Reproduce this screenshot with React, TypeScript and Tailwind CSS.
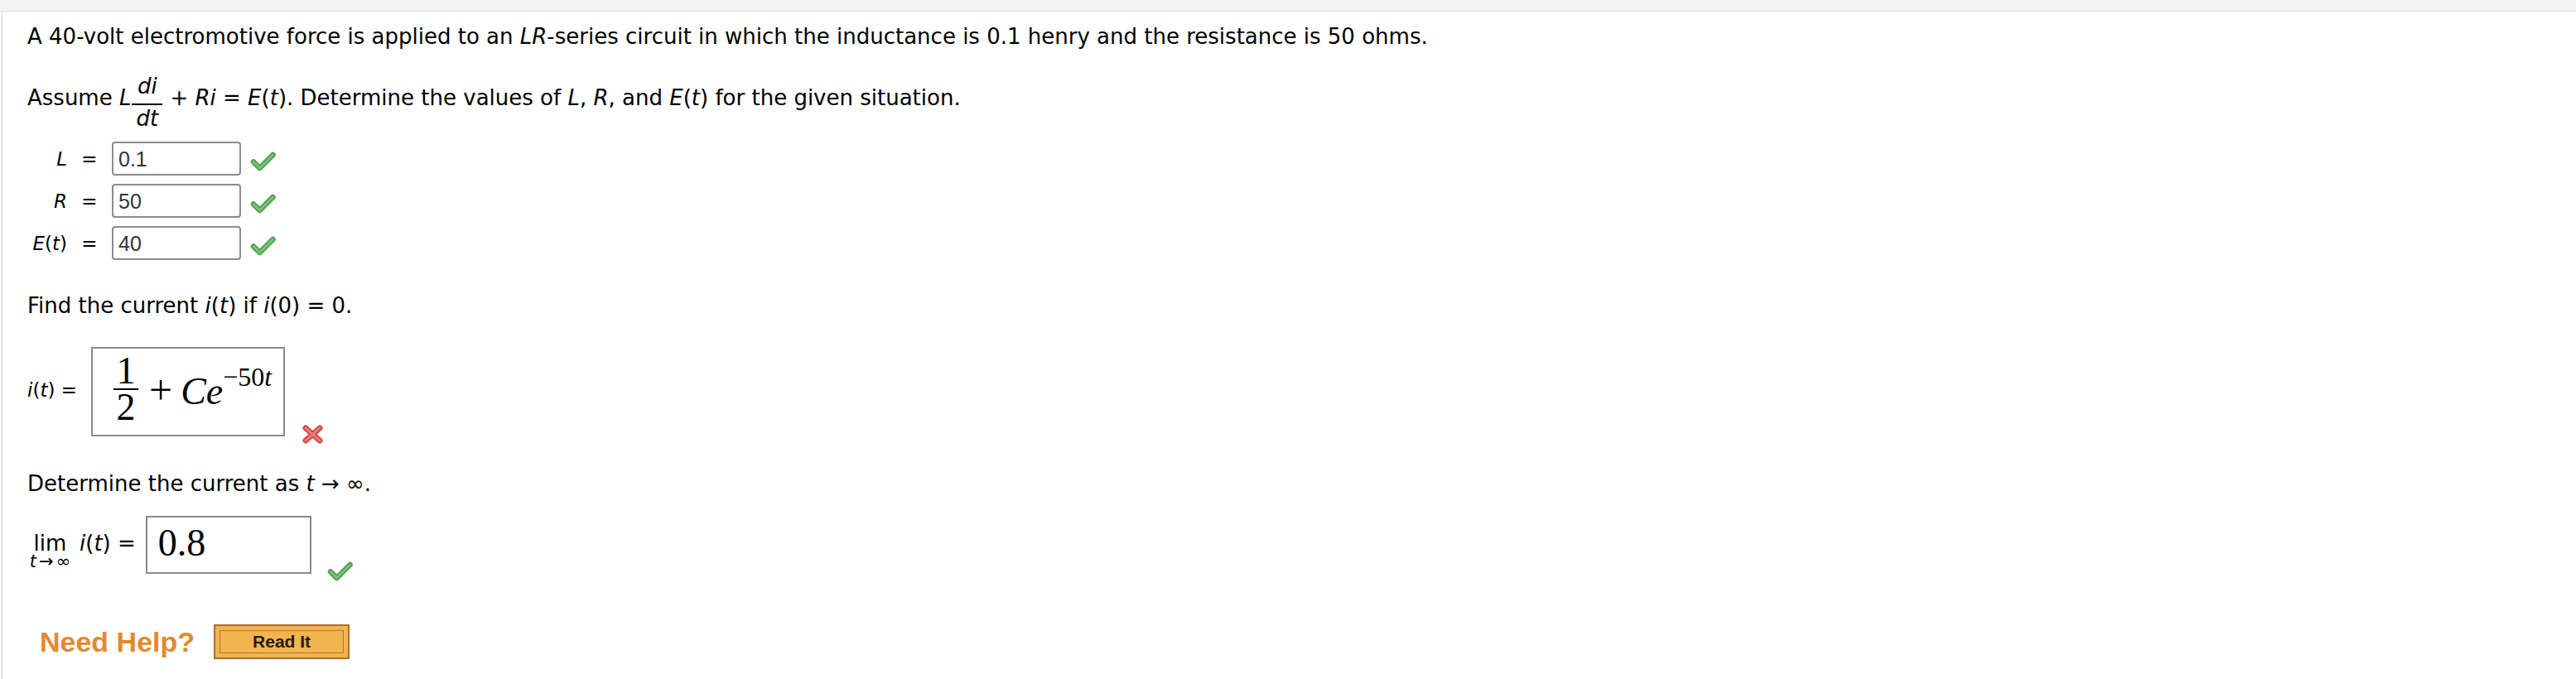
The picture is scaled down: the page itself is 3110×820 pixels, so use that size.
import React from "react";

function Check() {
  return (
    <svg width="31" height="24" viewBox="0 0 31 24">
      <path d="M4 12.5 L11.5 20 L27.5 4" fill="none" stroke="#4f9c4d" strokeWidth="6.5" strokeLinecap="round" strokeLinejoin="round" />
      <path d="M4 12.5 L11.5 20 L27.5 4" fill="none" stroke="#78c375" strokeWidth="3" strokeLinecap="round" strokeLinejoin="round" />
    </svg>
  );
}

function Cross() {
  return (
    <svg width="27" height="25" viewBox="0 0 27 25">
      <path d="M5 5 L22 20 M22 5 L5 20" fill="none" stroke="#d5453f" strokeWidth="7" strokeLinecap="round" />
      <path d="M5 5 L22 20 M22 5 L5 20" fill="none" stroke="#ee7d78" strokeWidth="3" strokeLinecap="round" />
    </svg>
  );
}

function ValueRow({ label, value }: { label: React.ReactNode; value: string }) {
  return (
    <div className="flex items-center h-[41px] text-[23px]">
      <div className="w-[48px] text-right leading-[28px]">{label}</div>
      <div className="w-[54px] text-center leading-[28px]">=</div>
      <div className="w-[156px] h-[41px] border-2 border-[#8c8c8c] rounded-[4px] flex items-center pl-[6px] font-['Liberation_Sans',Arial,sans-serif] text-[25px] leading-[28px] text-[#333333]">
        {value}
      </div>
      <div className="ml-[11px] self-start mt-[12px]">
        <Check />
      </div>
    </div>
  );
}

export default function App() {
  return (
    <div className="w-[3110px] h-[820px] bg-white overflow-hidden text-black font-['DejaVu_Sans',Verdana,sans-serif] text-[26px]">
      <div className="h-[13px] bg-[#f5f5f5] border-b border-[#dedede] box-content" />
      <div className="ml-[2px] border-l border-[#cccccc] pl-[30px] h-[806px]">
        <p className="pt-[14px] leading-[32px]">
          A 40-volt electromotive force is applied to an <i>LR</i>-series circuit in which the inductance is 0.1 henry and the resistance is 50 ohms.
        </p>

        <p className="mt-[33px] leading-[32px]">
          Assume <i>L</i>
          <span className="inline-flex flex-col items-center align-[14px] mx-[1px]">
            <span className="leading-[22px] px-[5px] italic">di</span>
            <span className="w-full h-[2px] bg-black mt-[10px]" />
            <span className="leading-[22px] px-[5px] italic mt-[5px]">dt</span>
          </span>{" "}
          + <i>Ri</i> = <i>E</i>(<i>t</i>). Determine the values of <i>L</i>, <i>R</i>, and <i>E</i>(<i>t</i>) for the given situation.
        </p>

        <div className="mt-[17px] flex flex-col gap-[10px]">
          <ValueRow label={<i>L</i>} value="0.1" />
          <ValueRow label={<i>R</i>} value="50" />
          <ValueRow
            label={
              <span>
                <i>E</i>(<i>t</i>)
              </span>
            }
            value="40"
          />
        </div>

        <p className="mt-[39px] leading-[32px]">
          Find the current <i>i</i>(<i>t</i>) if <i>i</i>(0) = 0.
        </p>

        <div className="mt-[34px] flex items-center h-[108px]">
          <div className="leading-[28px] mt-[-4px] text-[23px]">
            <i>i</i>(<i>t</i>) =
          </div>
          <div className="ml-[17px] w-[234px] h-[108px] border-2 border-[#8a8a8a] flex items-center pl-[25px] pb-[6px] font-['Liberation_Serif','Times_New_Roman',serif] text-[46px]">
            <span className="inline-flex flex-col items-center">
              <span className="leading-[34px] mb-[4px]">1</span>
              <span className="w-[30px] h-[2px] bg-black" />
              <span className="leading-[34px] mt-[4px]">2</span>
            </span>
            <span className="leading-[44px] ml-[13px] mt-[4px] whitespace-nowrap">
              <span className="text-[50px] mr-[10px]">+</span>
              <i>Ce</i>
              <span className="text-[32px] leading-none relative top-[-22px]">
                −50<i>t</i>
              </span>
            </span>
          </div>
          <div className="ml-[20px] self-end mb-[-10px]">
            <Cross />
          </div>
        </div>

        <p className="mt-[41px] leading-[32px]">
          Determine the current as <i>t</i> → ∞.
        </p>

        <div className="mt-[23px] flex items-start h-[70px]">
          <div className="mt-[17px] flex items-baseline">
            <div className="flex flex-col items-center w-[55px]">
              <span className="leading-[32px]">lim</span>
              <span className="leading-[20px] text-[21px] whitespace-nowrap flex items-center gap-[3px] mt-[-4px]">
                <i>t</i>
                <span>→</span>
                <span>∞</span>
              </span>
            </div>
            <span className="leading-[32px] ml-[8px]">
              <i>i</i>(<i>t</i>) =
            </span>
          </div>
          <div className="ml-[12px] w-[200px] h-[70px] border-2 border-[#8a8a8a] pl-[13px] pt-[6px] font-['Liberation_Serif','Times_New_Roman',serif] text-[46px] leading-[50px]">
            0.8
          </div>
          <div className="ml-[19px] mt-[55px]">
            <Check />
          </div>
        </div>

        <div className="mt-[61px] flex items-center ml-[15px]">
          <span className="font-['Liberation_Sans',Arial,sans-serif] font-bold text-[34px] text-[#e38a2e] leading-[38px]">
            Need Help?
          </span>
          <div className="ml-[23px] w-[164px] h-[42px] border-2 border-[#b06d2a] bg-[#f2b44e] p-[5px]">
            <div className="w-full h-full border border-[#b47530] flex items-center justify-center font-['Liberation_Sans',Arial,sans-serif] font-bold text-[21px] text-[#1e1e1e]">
              Read It
            </div>
          </div>
        </div>
      </div>
    </div>
  );
}
